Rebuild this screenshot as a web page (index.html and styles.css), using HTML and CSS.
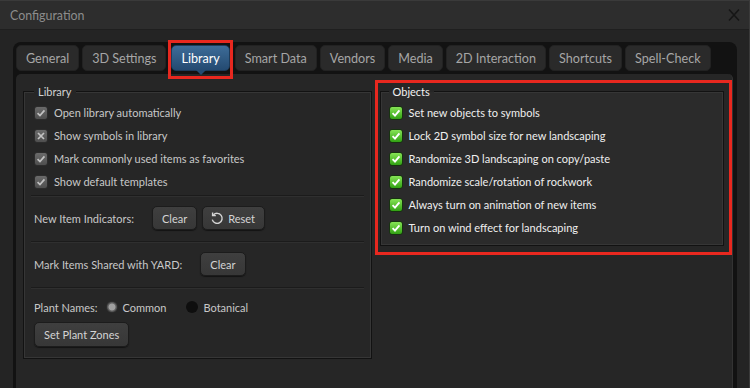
FILE: index.html
```html
<!DOCTYPE html>
<html lang="en">
<head>
    <meta charset="UTF-8">
    <title>Configuration</title>
    <link rel="stylesheet" href="styles.css">
</head>
<body>
  <div class="window">

    <div class="titlebar">
      <span class="title">Configuration</span>
      <svg class="close" width="14" height="14" viewBox="0 0 14 14">
        <path d="M2 1.5 L12 12.5 M12 1.5 L2 12.5" stroke="#161616" stroke-width="1.6" fill="none"/>
      </svg>
    </div>

    <div class="content">
      <div class="tabframe">

        <div class="tabs">
          <div class="tab">General</div>
          <div class="tab">3D Settings</div>
          <div class="tab active">Library</div>
          <div class="tab">Smart Data</div>
          <div class="tab">Vendors</div>
          <div class="tab">Media</div>
          <div class="tab">2D Interaction</div>
          <div class="tab">Shortcuts</div>
          <div class="tab">Spell-Check</div>
        </div>

        <div class="panel">

          <!-- left column -->
          <fieldset class="group group-library">
            <legend>Library</legend>

            <div class="checks">
              <div class="check-row">
                <span class="cb cb-gray"><svg viewBox="0 0 14 14"><path d="M3 7.2 L5.8 10 L11 4" /></svg></span>
                Open library automatically
              </div>
              <div class="check-row">
                <span class="cb cb-gray"><svg viewBox="0 0 14 14"><path d="M3.5 3.5 L10.5 10.5 M10.5 3.5 L3.5 10.5" /></svg></span>
                Show symbols in library
              </div>
              <div class="check-row">
                <span class="cb cb-gray"><svg viewBox="0 0 14 14"><path d="M3 7.2 L5.8 10 L11 4" /></svg></span>
                Mark commonly used items as favorites
              </div>
              <div class="check-row">
                <span class="cb cb-gray"><svg viewBox="0 0 14 14"><path d="M3 7.2 L5.8 10 L11 4" /></svg></span>
                Show default templates
              </div>
            </div>

            <div class="sep"></div>

            <div class="option-row">
              <span class="label">New Item Indicators:</span>
              <button class="btn">Clear</button>
              <button class="btn btn-icon">
                <svg width="14" height="14" viewBox="0 0 14 14">
                  <path d="M3.4 4 A5 5 0 1 1 2.3 8.6" stroke="#d6d6d6" stroke-width="1.4" fill="none"/>
                  <path d="M2.6 1.4 V4.6 H5.8" stroke="#d6d6d6" stroke-width="1.4" fill="none"/>
                </svg>
                Reset
              </button>
            </div>

            <div class="sep"></div>

            <div class="option-row">
              <span class="label">Mark Items Shared with YARD:</span>
              <button class="btn">Clear</button>
            </div>

            <div class="sep"></div>

            <div class="radio-row">
              <span class="label-plain">Plant Names:</span>
              <span class="radio radio-on"></span>
              <span class="radio-text">Common</span>
              <span class="radio radio-off"></span>
              <span class="radio-text">Botanical</span>
            </div>

            <button class="btn btn-zones">Set Plant Zones</button>
          </fieldset>

          <!-- right column -->
          <div class="highlight">
            <fieldset class="group group-objects">
              <legend>Objects</legend>
              <div class="check-row">
                <span class="cb cb-green"><svg viewBox="0 0 14 14"><path d="M3 7.2 L5.8 10 L11 4" /></svg></span>
                Set new objects to symbols
              </div>
              <div class="check-row">
                <span class="cb cb-green"><svg viewBox="0 0 14 14"><path d="M3 7.2 L5.8 10 L11 4" /></svg></span>
                Lock 2D symbol size for new landscaping
              </div>
              <div class="check-row">
                <span class="cb cb-green"><svg viewBox="0 0 14 14"><path d="M3 7.2 L5.8 10 L11 4" /></svg></span>
                Randomize 3D landscaping on copy/paste
              </div>
              <div class="check-row">
                <span class="cb cb-green"><svg viewBox="0 0 14 14"><path d="M3 7.2 L5.8 10 L11 4" /></svg></span>
                Randomize scale/rotation of rockwork
              </div>
              <div class="check-row">
                <span class="cb cb-green"><svg viewBox="0 0 14 14"><path d="M3 7.2 L5.8 10 L11 4" /></svg></span>
                Always turn on animation of new items
              </div>
              <div class="check-row">
                <span class="cb cb-green"><svg viewBox="0 0 14 14"><path d="M3 7.2 L5.8 10 L11 4" /></svg></span>
                Turn on wind effect for landscaping
              </div>
            </fieldset>
          </div>

        </div>
      </div>
    </div>

  </div>
</body>
</html>
```

FILE: styles.css
```css
html {
  box-sizing: border-box;
}

*, *:before, *:after {
  box-sizing: inherit;
}

body {
  margin: 0;
  background: #242424;
  font-family: Lato, "Liberation Sans", sans-serif;
  overflow: hidden;
}

.window {
  width: 750px;
  height: 388px;
  border-top: 1px solid #3a3a3a;
  border-right: 1px solid #3a3a3a;
}

/* title bar */
.titlebar {
  height: 29px;
  padding: 0 10px;
  display: flex;
  align-items: center;
  justify-content: space-between;
  background: #2d2d2d;
  border-bottom: 1px solid #1f1f1f;
}

.title {
  color: #8c8c8c;
  font-size: 12.4px;
}

.close {
  margin-right: -2px;
}

/* tabs */
.content {
  height: 358px;
  padding: 12px 12px 0 13px;
}

.tabframe {
  height: 100%;
  display: flex;
  flex-direction: column;
  padding: 3px 4px 0 3px;
  background: #121212;
  border-radius: 8px 8px 0 0;
}

.tabs {
  display: flex;
  gap: 3px;
  height: 26px;
}

.tab {
  flex-shrink: 0;
  display: flex;
  align-items: center;
  padding: 0 9px;
  white-space: nowrap;
  background: #2a2a2a;
  border: 1px solid #222;
  border-radius: 5px;
  color: #a6a6a6;
  font-size: 12.6px;
}

.tab.active {
  position: relative;
  margin: 0 2px;
  color: #fff;
  background: linear-gradient(#3d6c98, #244a71);
  border-color: #1d3b5a;
}

/* little pointer under the selected tab */
.tab.active:before {
  content: "";
  position: absolute;
  left: 50%;
  bottom: -5px;
  margin-left: -5px;
  border-left: 5px solid transparent;
  border-right: 5px solid transparent;
  border-top: 5px solid #244a71;
}

/* red annotation box */
.tab.active:after {
  content: "";
  position: absolute;
  top: -6px;
  bottom: -9px;
  left: -4px;
  right: -4px;
  border: 3px solid #e8281f;
}

.panel {
  flex: 1;
  margin-top: 3px;
  padding: 0 0 0 7px;
  display: flex;
  align-items: flex-start;
  gap: 3px;
  background: #262626;
  border-radius: 5px 5px 0 0;
  border-right: 1px solid #333;
}

/* group boxes */
.group {
  margin: 0;
  padding: 0;
  border: 1px solid #121212;
  box-shadow: inset 0 0 0 1px #363636;
  font-size: 11px;
}

.group legend {
  padding: 0 4px;
  margin-left: 0;
  line-height: 15px;
  font-size: 11px;
  background: #262626;
}

.group-library {
  width: 349px;
  height: 275px;
  margin-top: 10px;
  padding: 2px 10px 0 10px;
  color: #c8c8c8;
}

.group-library legend {
  color: #d2d2d2;
}

.highlight {
  width: 358px;
  margin-top: 6px;
  padding: 1px 5px 6px 2px;
  border: 3px solid #e8281f;
}

.group-objects {
  padding: 2px 8px 6px 8px;
  background: #2b2b2b;
  color: #efefef;
}

.group-objects legend {
  color: #f2f2f2;
  background: linear-gradient(#262626 50%, #2b2b2b 50%);
}

/* checkboxes */
.check-row {
  height: 23px;
  display: flex;
  align-items: center;
  gap: 6px;
}

.cb {
  width: 14px;
  height: 14px;
  border-radius: 3px;
  display: flex;
}

.cb svg {
  width: 100%;
  height: 100%;
}

.cb-gray {
  background: linear-gradient(#6a6a6a, #4f4f4f);
  border: 1px solid #2c2c2c;
}

.cb-gray path {
  stroke: #c2c2c2;
  stroke-width: 2;
  fill: none;
}

.cb-green {
  background: linear-gradient(#86e455, #31a113);
  border: 1px solid #173310;
}

.cb-green path {
  stroke: #fff;
  stroke-width: 2.2;
  fill: none;
}

.sep {
  margin: 2px -3px 0 -3px;
  border-top: 1px solid #1b1b1b;
  border-bottom: 1px solid #2f2f2f;
}

/* rows with buttons */
.option-row {
  display: flex;
  align-items: center;
  padding: 9px 0;
}

.label {
  margin-right: 18px;
}

.btn {
  height: 24px;
  padding: 0 9px;
  margin-right: 5px;
  display: flex;
  align-items: center;
  gap: 4px;
  font-family: inherit;
  font-size: 11px;
  color: #d4d4d4;
  background: linear-gradient(#3f3f3f, #373737);
  border: 1px solid #1c1c1c;
  border-radius: 5px;
  box-shadow: 0 1px 1px rgba(0,0,0,0.5);
}

.btn-icon {
  padding-left: 7px;
}

/* plant names */
.radio-row {
  display: flex;
  align-items: center;
  height: 20px;
  margin-top: 8px;
}

.label-plain {
  margin-right: 8px;
}

.radio {
  width: 12px;
  height: 12px;
  border-radius: 50%;
  margin-right: 5px;
}

.radio-on {
  background: radial-gradient(#a0a0a0 0 3px, #5c5c5c 4px);
  border: 1px solid #2e2e2e;
}

.radio-off {
  background: #0e0e0e;
}

.radio-text {
  margin-right: 20px;
}

.btn-zones {
  height: 25px;
  margin-top: 5px;
  padding: 0 9px;
}
```
